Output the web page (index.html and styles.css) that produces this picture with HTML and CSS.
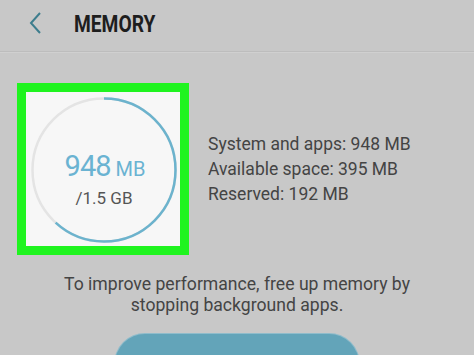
FILE: index.html
```html
<!DOCTYPE html>
<html>
<head>
<meta charset="utf-8">
<link rel="stylesheet" href="styles.css">
</head>
<body>
<div class="screen">
  <header class="topbar">
    <svg class="back" width="16" height="22" viewBox="0 0 16 22"><path d="M12 1 L3 11 L12 21" fill="none" stroke="#3d7d8d" stroke-width="2"/></svg>
    <h1 class="title">MEMORY</h1>
  </header>
  <section class="summary">
    <div class="frame">
      <div class="gauge">
        <svg class="ring" width="146" height="146" viewBox="0 0 146 146">
          <circle cx="73" cy="73" r="71.5" fill="none" stroke="#e4e4e4" stroke-width="2.5"/>
          <circle cx="73" cy="73" r="71.5" fill="none" stroke="#6cb3cd" stroke-width="2.5" stroke-dasharray="277.3 449.3" transform="rotate(-90 73 73)"/>
        </svg>
        <div class="reading">
          <div class="used"><span class="num">948</span><span class="unit">MB</span></div>
          <div class="total">/1.5 GB</div>
        </div>
      </div>
    </div>
    <ul class="stats">
      <li>System and apps: 948 MB</li>
      <li>Available space: 395 MB</li>
      <li>Reserved: 192 MB</li>
    </ul>
  </section>
  <p class="hint">To improve performance, free up memory by<br>stopping background apps.</p>
  <div class="cta-wrap"><button class="cta"></button></div>
</div>
</body>
</html>
```
FILE: styles.css
```css
html, body {
  margin: 0;
  padding: 0;
  background: #c8c8c8;
  font-family: Roboto, "Liberation Sans", sans-serif;
}
.screen {
  width: 474px;
  height: 355px;
  overflow: hidden;
}
.topbar {
  height: 52px;
  display: flex;
  align-items: center;
  border-bottom: 1px solid #bdbdbd;
  box-shadow: 0 1px 0 #d0d0d0;
  box-sizing: border-box;
}
.back {
  margin-left: 28px;
  margin-top: -6px;
}
.title {
  margin: -3px 0 0 30px;
  font-size: 24px;
  font-weight: 700;
  color: #1e1e1e;
  display: inline-block;
  transform: scaleX(0.8);
  transform-origin: left center;
}
.summary {
  display: flex;
  align-items: center;
  margin-top: 31px;
  padding-left: 17px;
}
.frame {
  width: 172px;
  height: 172px;
  box-sizing: border-box;
  border: 9px solid #1ff41f;
  background: #f7f7f7;
  display: flex;
  align-items: center;
  justify-content: center;
}
.gauge {
  position: relative;
  width: 146px;
  height: 146px;
  margin-left: 2px;
  margin-top: 1px;
}
.ring {
  display: block;
}
.reading {
  position: absolute;
  inset: 0;
  display: flex;
  flex-direction: column;
  align-items: center;
  padding-top: 55px;
}
.used {
  color: #6ab3d2;
  line-height: 1;
  display: flex;
  align-items: baseline;
  margin-left: 2px;
}
.num {
  font-size: 29px;
  line-height: 29px;
  letter-spacing: -1px;
}
.unit {
  font-size: 20px;
  margin-left: 5px;
}
.total {
  margin-top: 9px;
  font-size: 17px;
  color: #555;
  line-height: 1;
}
.stats {
  list-style: none;
  margin: 1px 0 0 19px;
  padding: 0;
  color: #444;
  font-size: 17.5px;
  line-height: 25px;
}
.hint {
  margin: 19px 0 0;
  text-align: center;
  color: #444;
  font-size: 17.6px;
  line-height: 21px;
}
.cta-wrap {
  display: flex;
  justify-content: center;
  margin-top: 18px;
  padding-right: 1px;
}
.cta {
  width: 244px;
  height: 60px;
  border: none;
  border-radius: 30px;
  background: #63a4b9;
  box-shadow: 0 0 0 1px #8fbccb;
}
```
